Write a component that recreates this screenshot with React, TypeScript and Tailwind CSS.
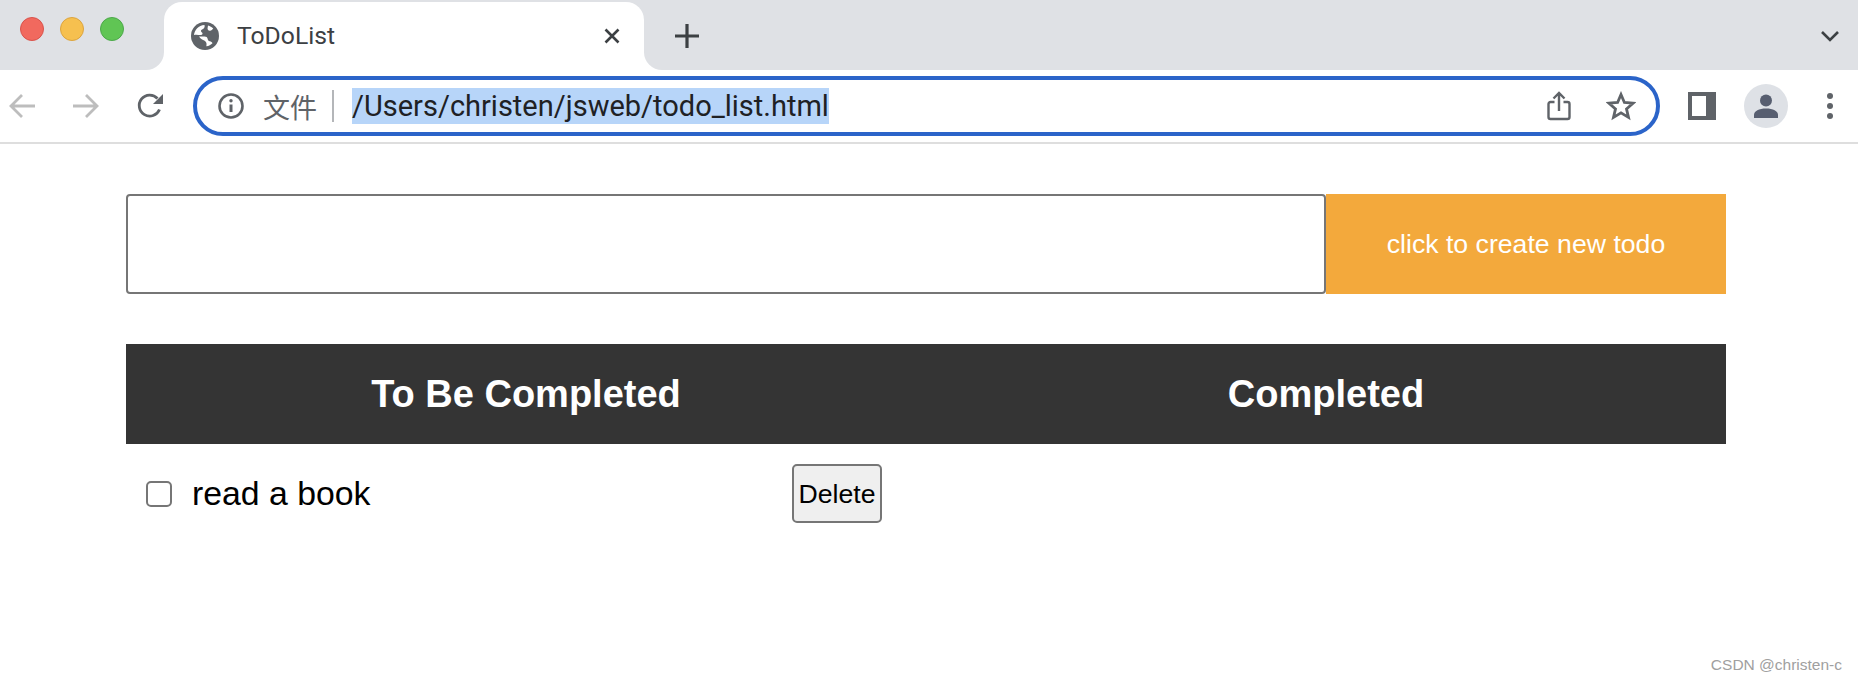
// 浏览器外壳 + 待办列表页面
function TrafficLight({ className }: { className: string }) {
  return <span className={`h-6 w-6 rounded-full border ${className}`} />;
}

function ChromeTab() {
  return (
    <div className="relative flex h-[68px] w-[480px] items-center self-end rounded-t-[18px] bg-white pl-[27px]">
      {/* 标签底部的内凹圆角 */}
      <span className="absolute bottom-0 left-[-18px] h-[18px] w-[18px] bg-white">
        <span className="block h-full w-full rounded-br-[18px] bg-[#dfe1e5]" />
      </span>
      <span className="absolute bottom-0 right-[-18px] h-[18px] w-[18px] bg-white">
        <span className="block h-full w-full rounded-bl-[18px] bg-[#dfe1e5]" />
      </span>
      <svg width="28" height="28" viewBox="0 0 28 28">
        <circle cx="14" cy="14" r="14" fill="#5f6368" />
        <path
          d="M3 13C3.500 8 7.500 3.500 13.500 3c.6 2.200-.4 3.800-2.400 4.400-1.400.5-1.500 2-.4 2.800 1.500 1 1 2.900-1 2.900-2 0-4-.6-6.700-.1z"
          fill="#fff"
        />
        <path
          d="M8 14.500h5.500c1.800 0 3 .8 3.200 2.500.1 1.300.9 2 2.100 2.200 1.300.2 2.300.9 2.700 2-1.500 1.600-3.700 2.800-6.200 3 .5-2 .3-3.500-.8-4.700-1-1.100-2.600-1.500-3.800-2.300-1.200-.7-2-1.600-2.700-2.700z"
          fill="#fff"
        />
        <path d="M17 3.600c2 .5 3.800 1.500 5.200 3-.9 1.300-2 2.300-3.500 2.100-1.600-.2-2.400-1.500-2.100-2.800.1-.9.400-1.500.4-2.300z" fill="#fff" />
      </svg>
      <span className="ml-[18px] text-[24.700px] leading-none text-[#3c4043] [font-family:'Roboto',sans-serif]">ToDoList</span>
      <svg className="ml-auto mr-[23px]" width="18" height="18" viewBox="0 0 18 18" fill="none" stroke="#3c4043" strokeWidth="2.600">
        <path d="M2.500 2.500l13 13M15.500 2.500l-13 13" />
      </svg>
    </div>
  );
}

function TabStrip() {
  return (
    <div className="flex h-[70px] items-start bg-[#dfe1e5]">
      <div className="flex w-[164px] gap-4 pl-5 pt-[17px]">
        <TrafficLight className="border-[#d9534c] bg-[#f1695e]" />
        <TrafficLight className="border-[#dca43f] bg-[#f6c04f]" />
        <TrafficLight className="border-[#4ca84a] bg-[#60c554]" />
      </div>
      <ChromeTab />
      <svg className="ml-[30px] mt-[23px]" width="26" height="26" viewBox="0 0 26 26" stroke="#3c4043" strokeWidth="3.200">
        <path d="M13 1v24M1 13h24" />
      </svg>
      <svg className="ml-auto mr-[19px] mt-[30px]" width="18" height="12" viewBox="0 0 18 12" fill="none" stroke="#3c4043" strokeWidth="2.600">
        <path d="M1 2l8 8 8-8" />
      </svg>
    </div>
  );
}

function AddressBar() {
  return (
    <div className="ml-[29px] flex h-[60px] w-[1467px] items-center rounded-[30px] border-[4px] border-[#2b64c9] bg-white pl-[21px] pr-[20px]">
      <svg width="26" height="26" viewBox="0 0 26 26" fill="none">
        <circle cx="13" cy="13" r="11.500" stroke="#5f6368" strokeWidth="2.600" />
        <path d="M13 11.500v7.500" stroke="#5f6368" strokeWidth="3" />
        <circle cx="13" cy="7.800" r="1.700" fill="#5f6368" />
      </svg>
      <span className="ml-[19px] text-[27px] leading-none text-[#5f6368] [font-family:'Noto_Sans_CJK_SC',sans-serif]">文件</span>
      <span className="ml-[15px] h-8 w-[2px] bg-[#b4b6b9]" />
      <span className="ml-[18px] flex h-9 items-center bg-[#b7d5f9] text-[29px] leading-none text-[#202124] [font-family:'Roboto',sans-serif]">
        /Users/christen/jsweb/todo_list.html
      </span>
      <svg className="ml-auto" width="24" height="30" viewBox="0 0 24 30" fill="none" stroke="#5f6368" strokeWidth="2.400">
        <path d="M7.500 11H3.500a2 2 0 0 0-2 2v13a2 2 0 0 0 2 2h17a2 2 0 0 0 2-2V13a2 2 0 0 0-2-2h-4" />
        <path d="M12 20V2.500M6.500 7.500L12 2l5.500 5.500" />
      </svg>
      <svg className="ml-[35px]" width="30" height="30" viewBox="0 0 30 30" fill="none" stroke="#5f6368" strokeWidth="2.800" strokeLinejoin="miter">
        <path d="M15 3.500l3.400 8 8.600.7-6.500 5.700 2 8.500L15 21.900l-7.500 4.500 2-8.500L3 12.200l8.600-.7z" />
      </svg>
    </div>
  );
}

function Toolbar() {
  return (
    <div className="flex h-[74px] items-center border-b-2 border-[#dedede] bg-white pl-[8px]">
      <svg width="28" height="26" viewBox="0 0 28 26" fill="none" stroke="#bdbdbd" strokeWidth="2.800">
        <path d="M27 13H3M14 2L3 13l11 11" />
      </svg>
      <svg className="ml-[36px]" width="28" height="26" viewBox="0 0 28 26" fill="none" stroke="#bdbdbd" strokeWidth="2.800">
        <path d="M1 13h24M14 2l11 11-11 11" />
      </svg>
      <svg className="ml-[36px]" width="28" height="28" viewBox="0 0 28 28" fill="none">
        <path d="M23.500 17.500A10.500 10.500 0 1 1 21.500 6.500" stroke="#5f6368" strokeWidth="2.800" />
        <path d="M27 2v10H17z" fill="#5f6368" />
      </svg>
      <AddressBar />
      <span className="ml-[28px] h-7 w-7 border-y-4 border-r-[10px] border-l-4 border-[#5f6368] bg-white" />
      <span className="ml-[28px] flex h-11 w-11 items-center justify-center rounded-full bg-[#dee1e6]">
        <svg width="24" height="24" viewBox="0 0 24 24" fill="#575e70">
          <circle cx="12" cy="6.500" r="6" />
          <path d="M0 24v-3c0-4 5-6.500 12-6.500s12 2.500 12 6.500v3z" />
        </svg>
      </span>
      <span className="ml-[39px] flex flex-col gap-1">
        <span className="h-[6px] w-[6px] rounded-full bg-[#5f6368]" />
        <span className="h-[6px] w-[6px] rounded-full bg-[#5f6368]" />
        <span className="h-[6px] w-[6px] rounded-full bg-[#5f6368]" />
      </span>
    </div>
  );
}

export default function App() {
  return (
    <div className="relative h-[680px] w-[1858px] overflow-hidden bg-white [font-family:'Liberation_Sans',Arial,sans-serif]">
      <TabStrip />
      <Toolbar />

      <main className="ml-[126px] w-[1600px] pt-[50px]">
        {/* 新建 todo */}
        <div className="flex h-[100px]">
          <input type="text" className="h-full w-[1200px] rounded-[4px] border-2 border-[#767676] bg-white" />
          <button type="button" className="h-full w-[400px] bg-[#f3a93c] text-[26.670px] text-white">
            click to create new todo
          </button>
        </div>

        {/* 列表标题 */}
        <div className="mt-[50px] grid h-[100px] grid-cols-2 items-center bg-[#343434] text-center text-[38px] font-bold text-white">
          <div>To Be Completed</div>
          <div>Completed</div>
        </div>

        {/* 待办项 */}
        <div className="mt-5 flex h-[59px] w-[756px] items-center pl-5">
          <input type="checkbox" className="h-[26px] w-[26px] appearance-none rounded-[5px] border-2 border-[#767676] bg-white" />
          <span className="ml-5 text-[33.800px] leading-none text-black">read a book</span>
          <button type="button" className="ml-auto h-[59px] w-[90px] rounded-[5px] border-2 border-[#767676] bg-[#efefef] text-[26.670px] text-black">
            Delete
          </button>
        </div>
      </main>

      <span className="absolute bottom-2 right-4 text-[15.500px] leading-none text-[#a0a0a0]">CSDN @christen-c</span>
    </div>
  );
}
